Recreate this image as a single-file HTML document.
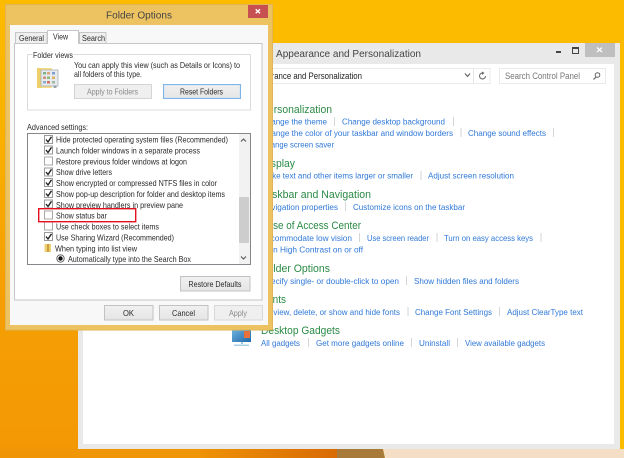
<!DOCTYPE html>
<html>
<head>
<meta charset="utf-8">
<style>
html,body{margin:0;padding:0;background:#fdb900}
body{width:624px;height:458px;overflow:hidden}
svg{display:block;filter:blur(.32px)}
text{font-family:"Liberation Sans",sans-serif}
.d{font-size:8.5px;fill:#2a2a2a}
.l{font-size:8.7px;fill:#2f78d8}
.h{font-size:11px;fill:#2b8a45}
</style>
</head>
<body>
<svg xmlns="http://www.w3.org/2000/svg" width="624" height="458" viewBox="0 0 624 458">
<defs>
<linearGradient id="bg" x1="0" y1="0" x2="0" y2="1">
<stop offset="0" stop-color="#fdbb00"/><stop offset="0.3" stop-color="#fbb000"/><stop offset="0.6" stop-color="#f6a004"/><stop offset="1" stop-color="#f39804"/>
</linearGradient>
<linearGradient id="bot" x1="0" y1="0" x2="1" y2="0">
<stop offset="0" stop-color="#ee9206"/><stop offset="1" stop-color="#d96a04"/>
</linearGradient>
<linearGradient id="btn" x1="0" y1="0" x2="0" y2="1">
<stop offset="0" stop-color="#f0f0f0"/><stop offset="1" stop-color="#e5e5e5"/>
</linearGradient>
<linearGradient id="mon" x1="0" y1="0" x2="1" y2="1">
<stop offset="0" stop-color="#6fb2de"/><stop offset="1" stop-color="#1f6aa8"/>
</linearGradient>
<g id="c"><rect x="44.5" y="-4.5" width="8" height="8" fill="#fff" stroke="#9a9a9a" stroke-width="1"/><path d="M46 -.5 L48 2 L51.5 -3.2" fill="none" stroke="#222" stroke-width="1.4"/></g>
<g id="u"><rect x="44.5" y="-4.5" width="8" height="8" fill="#fff" stroke="#a8a8a8" stroke-width="1"/></g>
</defs>

<!-- desktop -->
<rect width="624" height="458" fill="#fdbb00"/>
<rect x="0" y="0" width="78" height="458" fill="url(#bg)"/>
<rect x="0" y="449" width="220" height="9" fill="#f09606"/>
<rect x="200" y="449" width="137" height="9" fill="url(#bot)"/>
<polygon points="337,449 383,449 385,458 337,458" fill="#a87a3a"/>
<polygon points="383,449 624,449 624,458 385,458" fill="#f4dfc6"/>

<!-- control panel window -->
<rect x="78" y="43" width="542" height="406" fill="#e9e9e9"/>
<rect x="83" y="64" width="531" height="380" fill="#fff"/>
<text x="276" y="57" font-size="10.5" fill="#444" textLength="145" lengthAdjust="spacingAndGlyphs">Appearance and Personalization</text>
<rect x="556" y="51" width="5" height="2" fill="#444"/>
<rect x="572.5" y="47.5" width="6" height="6" fill="none" stroke="#444"/>
<rect x="572" y="47" width="7" height="2" fill="#444"/>
<rect x="585" y="43" width="30" height="14" fill="#bfbfbf"/>
<path d="M597 47.5 L602 52 M602 47.5 L597 52" stroke="#fff" stroke-width="1.2"/>

<rect x="200" y="68.5" width="290" height="15" fill="#fff" stroke="#eaeaea"/>
<line x1="473.5" y1="69" x2="473.5" y2="83" stroke="#e4e4e4"/>
<text x="249" y="79" font-size="8.8" fill="#222" textLength="113" lengthAdjust="spacingAndGlyphs">Appearance and Personalization</text>
<path d="M465 73.5 L467.5 76.5 L470 73.5" fill="none" stroke="#555" stroke-width="1"/>
<path d="M485.5 76 A3 3 0 1 1 483 73" fill="none" stroke="#666" stroke-width="1"/>
<path d="M482 71.5 L484.5 73 L482 75" fill="#666"/>
<rect x="499.5" y="68.5" width="106" height="15" fill="#fff" stroke="#eaeaea"/>
<text x="505" y="79" font-size="8.8" fill="#777" textLength="75" lengthAdjust="spacingAndGlyphs">Search Control Panel</text>
<circle cx="597.5" cy="75" r="2.3" fill="none" stroke="#666"/>
<path d="M596 77 L593.5 79.5" stroke="#666" stroke-width="1.2"/>

<!-- links -->
<g stroke="#d6d6d6" stroke-width="1">
<line x1="334.5" y1="117" x2="334.5" y2="126"/><line x1="453.5" y1="117" x2="453.5" y2="126"/>
<line x1="461" y1="128" x2="461" y2="137"/><line x1="553.5" y1="128" x2="553.5" y2="137"/>
<line x1="421" y1="171" x2="421" y2="180"/>
<line x1="345.5" y1="202" x2="345.5" y2="211"/>
<line x1="359.5" y1="233" x2="359.5" y2="242"/><line x1="437" y1="233" x2="437" y2="242"/><line x1="541" y1="233" x2="541" y2="242"/>
<line x1="406.5" y1="276" x2="406.5" y2="285"/>
<line x1="408" y1="307" x2="408" y2="316"/><line x1="499.5" y1="307" x2="499.5" y2="316"/>
<line x1="308.5" y1="338" x2="308.5" y2="347"/><line x1="411.5" y1="338" x2="411.5" y2="347"/><line x1="457.5" y1="338" x2="457.5" y2="347"/>
</g>
<text class="h" x="261" y="113" textLength="71" lengthAdjust="spacingAndGlyphs">Personalization</text>
<text class="l" x="261" y="124.5" textLength="66" lengthAdjust="spacingAndGlyphs">Change the theme</text>
<text class="l" x="342" y="124.5" textLength="103" lengthAdjust="spacingAndGlyphs">Change desktop background</text>
<text class="l" x="261" y="136" textLength="192" lengthAdjust="spacingAndGlyphs">Change the color of your taskbar and window borders</text>
<text class="l" x="468" y="136" textLength="78" lengthAdjust="spacingAndGlyphs">Change sound effects</text>
<text class="l" x="261" y="147.5" textLength="73" lengthAdjust="spacingAndGlyphs">Change screen saver</text>
<text class="h" x="261" y="167" textLength="34" lengthAdjust="spacingAndGlyphs">Display</text>
<text class="l" x="261" y="178.5" textLength="152" lengthAdjust="spacingAndGlyphs">Make text and other items larger or smaller</text>
<text class="l" x="428" y="178.5" textLength="86" lengthAdjust="spacingAndGlyphs">Adjust screen resolution</text>
<text class="h" x="261" y="198" textLength="110" lengthAdjust="spacingAndGlyphs">Taskbar and Navigation</text>
<text class="l" x="261" y="210" textLength="77" lengthAdjust="spacingAndGlyphs">Navigation properties</text>
<text class="l" x="353" y="210" textLength="112" lengthAdjust="spacingAndGlyphs">Customize icons on the taskbar</text>
<text class="h" x="261" y="229" textLength="100" lengthAdjust="spacingAndGlyphs">Ease of Access Center</text>
<text class="l" x="261" y="241" textLength="91" lengthAdjust="spacingAndGlyphs">Accommodate low vision</text>
<text class="l" x="367" y="241" textLength="62" lengthAdjust="spacingAndGlyphs">Use screen reader</text>
<text class="l" x="444" y="241" textLength="89" lengthAdjust="spacingAndGlyphs">Turn on easy access keys</text>
<text class="l" x="261" y="252.5" textLength="102" lengthAdjust="spacingAndGlyphs">Turn High Contrast on or off</text>
<text class="h" x="261" y="272" textLength="69" lengthAdjust="spacingAndGlyphs">Folder Options</text>
<text class="l" x="261" y="284" textLength="138" lengthAdjust="spacingAndGlyphs">Specify single- or double-click to open</text>
<text class="l" x="414" y="284" textLength="105" lengthAdjust="spacingAndGlyphs">Show hidden files and folders</text>
<text class="h" x="261" y="303" textLength="25" lengthAdjust="spacingAndGlyphs">Fonts</text>
<text class="l" x="261" y="315" textLength="139" lengthAdjust="spacingAndGlyphs">Preview, delete, or show and hide fonts</text>
<text class="l" x="415" y="315" textLength="77" lengthAdjust="spacingAndGlyphs">Change Font Settings</text>
<text class="l" x="507" y="315" textLength="76" lengthAdjust="spacingAndGlyphs">Adjust ClearType text</text>
<text class="h" x="261" y="334" textLength="79" lengthAdjust="spacingAndGlyphs">Desktop Gadgets</text>
<text class="l" x="261" y="346" textLength="39" lengthAdjust="spacingAndGlyphs">All gadgets</text>
<text class="l" x="316" y="346" textLength="88" lengthAdjust="spacingAndGlyphs">Get more gadgets online</text>
<text class="l" x="419" y="346" textLength="31" lengthAdjust="spacingAndGlyphs">Uninstall</text>
<text class="l" x="465" y="346" textLength="80" lengthAdjust="spacingAndGlyphs">View available gadgets</text>

<!-- gadget icon -->
<rect x="232" y="329" width="19" height="13" fill="url(#mon)"/>
<rect x="244" y="331" width="6" height="7" fill="#e8703a"/>
<rect x="241" y="342" width="2" height="2" fill="#9cc4de"/>
<rect x="234" y="344.5" width="15" height="1.5" fill="#a9d0e8"/>

<!-- dialog -->
<rect x="5" y="4" width="268" height="326.5" fill="#edc362"/>
<rect x="5.5" y="4.5" width="267" height="325.5" fill="none" stroke="#d8ab50" stroke-opacity=".6"/>
<rect x="248" y="5" width="20" height="13" fill="#c75050"/>
<path d="M255.7 9.2 L260 13.3 M260 9.2 L255.7 13.3" stroke="#fff" stroke-width="1.4"/>
<text x="106" y="18.5" font-size="10.3" fill="#444" textLength="66" lengthAdjust="spacingAndGlyphs">Folder Options</text>
<rect x="10" y="25" width="258" height="300" fill="#f8f8f8"/>

<!-- tabs -->
<rect x="14.5" y="43.5" width="247.5" height="256.5" fill="#fff" stroke="#c6c6c6"/>
<rect x="15.5" y="32.5" width="31.5" height="11" fill="#efefef" stroke="#c6c6c6"/>
<rect x="79.5" y="32.5" width="26.5" height="11" fill="#efefef" stroke="#c6c6c6"/>
<path d="M47.5 44 V30.5 H78.5 V44" fill="#fff" stroke="#c6c6c6"/>
<rect x="48" y="42" width="30" height="3" fill="#fff"/>
<text class="d" x="19" y="41" textLength="25" lengthAdjust="spacingAndGlyphs">General</text>
<text class="d" x="53" y="39.5" textLength="15" lengthAdjust="spacingAndGlyphs">View</text>
<text class="d" x="82" y="41" textLength="23" lengthAdjust="spacingAndGlyphs">Search</text>

<!-- folder views group -->
<rect x="27.5" y="54.5" width="223" height="55.5" fill="none" stroke="#dcdcdc"/>
<rect x="32" y="50" width="42" height="9" fill="#fff"/>
<text class="d" x="33" y="58" textLength="40" lengthAdjust="spacingAndGlyphs">Folder views</text>
<text class="d" x="74" y="68" textLength="166" lengthAdjust="spacingAndGlyphs">You can apply this view (such as Details or Icons) to</text>
<text class="d" x="74" y="77" textLength="68" lengthAdjust="spacingAndGlyphs">all folders of this type.</text>
<!-- folder icon -->
<rect x="37" y="68" width="15" height="20" rx="1" fill="#f6dd84"/>
<rect x="37" y="68" width="4" height="20" fill="#efcf6a"/>
<rect x="41" y="70" width="17" height="16" fill="#e6ebef" stroke="#a9b0b6" stroke-width=".8"/>
<g>
<rect x="43" y="72" width="3" height="2.5" fill="#7fb08f"/><rect x="47" y="72" width="3" height="2.5" fill="#d9a27a"/><rect x="52" y="72" width="3" height="2.5" fill="#7f9fd0"/>
<rect x="43" y="76.5" width="3" height="2.5" fill="#d08f7f"/><rect x="47" y="76.5" width="3" height="2.5" fill="#8fbb7f"/><rect x="52" y="76.5" width="3" height="2.5" fill="#e0b060"/>
<rect x="43" y="81" width="3" height="2.5" fill="#8faccc"/><rect x="47" y="81" width="3" height="2.5" fill="#d0785f"/><rect x="52" y="81" width="3" height="2.5" fill="#a0b8a0"/>
</g>
<rect x="53.5" y="85.5" width="3" height="2.5" fill="#9aa2a8"/>

<!-- apply / reset -->
<rect x="74.5" y="84.5" width="77" height="14" fill="#efefef" stroke="#d4d4d4"/>
<text x="87" y="94.5" font-size="8.5" fill="#8a8a8a" textLength="51" lengthAdjust="spacingAndGlyphs">Apply to Folders</text>
<rect x="163.5" y="84.5" width="77" height="14" fill="url(#btn)" stroke="#7db4ea"/>
<rect x="164.5" y="85.5" width="75" height="12" fill="none" stroke="#cfe3f6" stroke-width=".5"/>
<text class="d" x="180" y="94.5" textLength="43" lengthAdjust="spacingAndGlyphs">Reset Folders</text>

<text class="d" x="27" y="130" textLength="61" lengthAdjust="spacingAndGlyphs">Advanced settings:</text>

<!-- list -->
<rect x="27.5" y="133.5" width="223" height="131" fill="#fff" stroke="#84888c"/>
<rect x="239" y="134" width="11" height="130" fill="#f2f2f2"/>
<rect x="239" y="197" width="10" height="46" fill="#cdcdcd"/>
<path d="M241 141.5 L243.5 139 L246 141.5" fill="none" stroke="#555" stroke-width="1.1"/>
<path d="M241 256.5 L243.5 259 L246 256.5" fill="none" stroke="#555" stroke-width="1.1"/>

<use href="#c" y="140"/><use href="#c" y="150.5"/><use href="#u" y="161.5"/><use href="#c" y="172.5"/><use href="#c" y="183"/><use href="#c" y="194"/><use href="#c" y="204.5"/><use href="#u" y="215.5"/><use href="#u" y="226.5"/><use href="#c" y="237"/>

<text class="d" x="56" y="142.5" textLength="172" lengthAdjust="spacingAndGlyphs">Hide protected operating system files (Recommended)</text>
<text class="d" x="56" y="153.5" textLength="144" lengthAdjust="spacingAndGlyphs">Launch folder windows in a separate process</text>
<text class="d" x="56" y="164.5" textLength="131" lengthAdjust="spacingAndGlyphs">Restore previous folder windows at logon</text>
<text class="d" x="56" y="175" textLength="56" lengthAdjust="spacingAndGlyphs">Show drive letters</text>
<text class="d" x="56" y="186" textLength="161" lengthAdjust="spacingAndGlyphs">Show encrypted or compressed NTFS files in color</text>
<text class="d" x="56" y="197" textLength="169" lengthAdjust="spacingAndGlyphs">Show pop-up description for folder and desktop items</text>
<text class="d" x="56" y="208" textLength="127" lengthAdjust="spacingAndGlyphs">Show preview handlers in preview pane</text>
<text class="d" x="56" y="218.5" textLength="51" lengthAdjust="spacingAndGlyphs">Show status bar</text>
<text class="d" x="56" y="229.5" textLength="103" lengthAdjust="spacingAndGlyphs">Use check boxes to select items</text>
<text class="d" x="56" y="240.5" textLength="118" lengthAdjust="spacingAndGlyphs">Use Sharing Wizard (Recommended)</text>
<path d="M44.5 244 H51 V252 H44.5 Z" fill="#f0cf70"/>
<rect x="47" y="244" width="2" height="8" fill="#c9a040"/>
<text class="d" x="55" y="251.5" textLength="82" lengthAdjust="spacingAndGlyphs">When typing into list view</text>
<circle cx="60.5" cy="258.5" r="3.7" fill="#fff" stroke="#555" stroke-width=".9"/>
<circle cx="60.5" cy="258.5" r="2.2" fill="#111"/>
<text class="d" x="68" y="262" textLength="123" lengthAdjust="spacingAndGlyphs">Automatically type into the Search Box</text>

<!-- red highlight -->
<rect x="38.7" y="208.7" width="97" height="13" fill="none" stroke="#e4101e" stroke-width="1.4"/>

<!-- buttons -->
<rect x="180.5" y="276.5" width="69.5" height="14.5" fill="url(#btn)" stroke="#c2c2c2"/>
<text class="d" x="188.5" y="287" textLength="53" lengthAdjust="spacingAndGlyphs">Restore Defaults</text>
<rect x="104.5" y="305.5" width="48.5" height="14.5" fill="url(#btn)" stroke="#c2c2c2"/>
<text class="d" x="123" y="316" textLength="11" lengthAdjust="spacingAndGlyphs">OK</text>
<rect x="159.5" y="305.5" width="48.5" height="14.5" fill="url(#btn)" stroke="#c2c2c2"/>
<text class="d" x="172" y="316" textLength="23" lengthAdjust="spacingAndGlyphs">Cancel</text>
<rect x="214.5" y="305.5" width="48" height="14.5" fill="#efefef" stroke="#d8d8d8"/>
<text x="229" y="316" font-size="8.5" fill="#8a8a8a" textLength="18" lengthAdjust="spacingAndGlyphs">Apply</text>
</svg>
</body>
</html>
